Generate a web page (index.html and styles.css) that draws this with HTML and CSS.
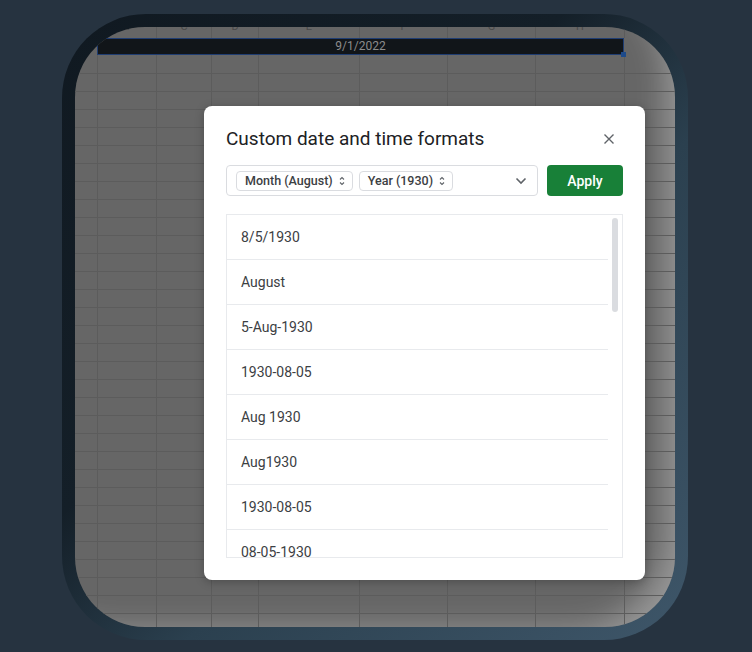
FILE: index.html
```html
<!DOCTYPE html>
<html lang="en">
<head>
  <meta charset="UTF-8">
  <title>Custom date and time formats</title>
  <link rel="stylesheet" href="styles.css">
</head>
<body>
  <div class="frame">
    <div class="screen">

      <!-- spreadsheet behind the dialog -->
      <div class="sheet">
        <div class="colhead">
          <div></div><div>B</div><div>C</div><div>D</div><div>E</div><div>F</div><div>G</div><div>H</div><div>I</div>
        </div>
        <div class="selrow">
          <div class="cell"></div>
          <div class="merged">9/1/2022<span class="handle"></span></div>
          <div class="cell"></div>
        </div>
        <div class="cols">
          <div></div><div></div><div></div><div></div><div></div><div></div><div></div><div></div><div></div>
        </div>
      </div>

      <div class="dialog">
        <div class="dialog-head">
          <h2>Custom date and time formats</h2>
          <div class="close">
            <svg width="10" height="10" viewBox="0 0 10 10"><path d="M0.5 0.5 L9.5 9.5 M9.5 0.5 L0.5 9.5" stroke="#5f6368" stroke-width="1.4" fill="none"/></svg>
          </div>
        </div>

        <div class="toolbar">
          <div class="picker">
            <div class="chip">Month (August)
              <svg width="6" height="10" viewBox="0 0 6 10"><path d="M1 3.5 L3 1.5 L5 3.5 M1 6.5 L3 8.5 L5 6.5" stroke="#5f6368" stroke-width="1.1" fill="none"/></svg>
            </div>
            <div class="chip">Year (1930)
              <svg width="6" height="10" viewBox="0 0 6 10"><path d="M1 3.5 L3 1.5 L5 3.5 M1 6.5 L3 8.5 L5 6.5" stroke="#5f6368" stroke-width="1.1" fill="none"/></svg>
            </div>
            <svg class="caret" width="12" height="8" viewBox="0 0 12 8"><path d="M1.5 1.5 L6 6 L10.5 1.5" stroke="#5f6368" stroke-width="1.6" fill="none"/></svg>
          </div>
          <div class="apply">Apply</div>
        </div>

        <div class="list">
          <div class="rows">
            <div class="row">8/5/1930</div>
            <div class="row">August</div>
            <div class="row">5-Aug-1930</div>
            <div class="row">1930-08-05</div>
            <div class="row">Aug 1930</div>
            <div class="row">Aug1930</div>
            <div class="row">1930-08-05</div>
            <div class="row">08-05-1930</div>
          </div>
          <div class="scroll"><div class="thumb"></div></div>
        </div>
      </div>

    </div>
  </div>
</body>
</html>
```

FILE: styles.css
```css
body {
  margin: 0;
  background-color: #263340;
  font-family: Roboto, "Liberation Sans", sans-serif;
  overflow: hidden;
}

.frame {
  width: 626px;
  height: 626px;
  margin: 14px 0 0 62px;
  padding: 13px;
  box-sizing: border-box;
  border-radius: 84px;
  background: linear-gradient(135deg, #101921 0%, #141f28 40%, #2b404f 60%, #3e5669 100%);
}

.screen {
  position: relative;
  width: 600px;
  height: 600px;
  border-radius: 70px;
  overflow: hidden;
  background-color: #666;
  box-shadow: inset -34px -22px 30px -24px rgba(255, 255, 255, 0.32);
}

/* sheet */
.sheet {
  display: flex;
  flex-direction: column;
  height: 100%;
}

.colhead, .cols {
  display: grid;
  grid-template-columns: 23px 59px 55px 47px 101px 88px 88px 89px 1fr;
}

.colhead {
  height: 11px;
  overflow: hidden;
}

.colhead div {
  border-right: 1px solid #5c5c5c;
  text-align: center;
  font-size: 11px;
  line-height: 11px;
  margin-top: -6px;
  color: #4a4a4a;
}

.selrow {
  display: grid;
  grid-template-columns: 22px 527px 1fr;
  height: 17px;
}

.merged {
  position: relative;
  background-color: #111519;
  border: 1px solid #1f3d72;
  color: #8c8c8c;
  font-size: 12px;
  line-height: 15px;
  text-align: center;
}

.handle {
  position: absolute;
  right: -3px;
  bottom: -3px;
  width: 5px;
  height: 5px;
  background-color: #1d4a8a;
}

.cols {
  flex: 1;
  background: repeating-linear-gradient(to bottom, transparent 0 17px, #5c5c5c 17px 18px);
  background-position: 0 1px;
}

.cols div {
  border-right: 1px solid #5c5c5c;
}

.cols div:last-child {
  border-right: none;
}

/* dialog */
.dialog {
  position: absolute;
  left: 129px;
  top: 79px;
  width: 441px;
  height: 474px;
  box-sizing: border-box;
  padding: 19px 22px 22px;
  background-color: #fff;
  border-radius: 8px;
  box-shadow: 0 2px 10px rgba(0, 0, 0, 0.25);
}

.dialog-head {
  display: flex;
  justify-content: space-between;
  align-items: center;
  height: 28px;
}

.dialog-head h2 {
  margin: 0;
  font-size: 19px;
  line-height: 28px;
  font-weight: 400;
  color: #202124;
}

.close {
  width: 28px;
  height: 28px;
  display: flex;
  align-items: center;
  justify-content: center;
}

.toolbar {
  display: flex;
  gap: 9px;
  height: 31px;
  margin-top: 12px;
}

.picker {
  width: 312px;
  box-sizing: border-box;
  border: 1px solid #dadce0;
  border-radius: 4px;
  display: flex;
  align-items: center;
  gap: 6px;
  padding: 0 10px 0 9px;
}

.chip {
  height: 20px;
  box-sizing: border-box;
  border: 1px solid #dadce0;
  border-radius: 4px;
  padding: 0 7px 0 8px;
  display: flex;
  align-items: center;
  gap: 6px;
  font-size: 12.5px;
  font-weight: 500;
  color: #3c4043;
}

.caret {
  margin-left: auto;
}

.apply {
  width: 76px;
  background-color: #188038;
  color: #fff;
  border-radius: 4px;
  display: flex;
  align-items: center;
  justify-content: center;
  font-size: 14px;
  font-weight: 500;
}

.list {
  display: flex;
  margin-top: 18px;
  height: 344px;
  box-sizing: border-box;
  border: 1px solid #e8eaed;
  overflow: hidden;
}

.rows {
  flex: 1;
}

.row {
  height: 45px;
  box-sizing: border-box;
  border-bottom: 1px solid #e8eaed;
  padding-left: 14px;
  line-height: 44px;
  font-size: 14px;
  color: #3c4043;
}

.scroll {
  width: 14px;
  padding: 3px 4px 0;
  box-sizing: border-box;
}

.thumb {
  height: 94px;
  border-radius: 3px;
  background-color: #dadce0;
}
```
